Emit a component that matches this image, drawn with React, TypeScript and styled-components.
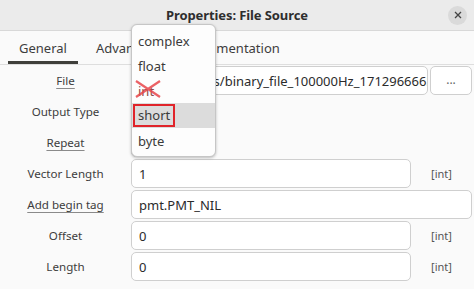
import React from "react";
import styled, { createGlobalStyle } from "styled-components";

const GlobalStyle = createGlobalStyle`
  html, body {
    margin: 0;
    padding: 0;
    background: #fafafa;
  }
  body {
    font-family: "Noto Sans", "Open Sans", sans-serif;
    color: #3d3d3d;
  }
`;

const Window = styled.div`
  position: relative;
  width: 474px;
  height: 289px;
  overflow: hidden;
  background: #fafafa;
  display: flex;
  flex-direction: column;
`;

const HeaderBar = styled.div`
  height: 31px;
  flex-shrink: 0;
  background: #ebebeb;
  border-bottom: 1px solid #d8d8d8;
  display: grid;
  grid-template-columns: 1fr auto 1fr;
  align-items: center;
  box-sizing: border-box;
`;

const Title = styled.div`
  grid-column: 2;
  font-size: 13px;
  font-weight: 700;
  color: #2e2e2e;
  letter-spacing: -0.1px;
`;

const CloseButton = styled.div`
  grid-column: 3;
  justify-self: end;
  margin-right: 7px;
  width: 19px;
  height: 19px;
  border-radius: 50%;
  background: #dadada;
  display: flex;
  align-items: center;
  justify-content: center;
`;

const TabBar = styled.div`
  height: 34px;
  flex-shrink: 0;
  box-sizing: border-box;
  border-bottom: 1px solid #dedede;
  display: flex;
  align-items: stretch;
  padding-left: 8px;
`;

const Tab = styled.div<{ $active?: boolean }>`
  padding: 0 11px;
  display: flex;
  align-items: center;
  font-size: 13px;
  color: #3d3d3d;
  box-sizing: border-box;
  border-bottom: 3px solid ${(p) => (p.$active ? "#3f3f3a" : "transparent")};
  padding-top: 3px;
  margin-right: 7px;
`;

const Form = styled.div`
  display: grid;
  grid-template-columns: 131px 1fr 61px;
  grid-auto-rows: 31px;
  padding-right: 2px;
`;

const Label = styled.div<{ $underline?: boolean }>`
  grid-column: 1;
  display: flex;
  align-items: center;
  justify-content: center;
  font-size: 11.6px;
  color: #3d3d3d;
  span {
    text-decoration: ${(p) => (p.$underline ? "underline" : "none")};
    text-decoration-color: #8a8a8a;
    text-underline-offset: 3px;
  }
`;

const Entry = styled.div<{ $span?: boolean }>`
  grid-column: ${(p) => (p.$span ? "2 / 4" : "2")};
  margin: 1px 0;
  box-sizing: border-box;
  background: #ffffff;
  border: 1px solid #cfcfcf;
  border-radius: 5px;
  display: flex;
  align-items: center;
  padding: 0 7px;
  font-size: 13px;
  color: #2b2b2b;
  white-space: nowrap;
  overflow: hidden;
`;

const FileCell = styled.div`
  grid-column: 2 / 4;
  display: flex;
  gap: 2px;
  margin: 1px 0;
`;

const FileEntry = styled(Entry)`
  flex: 1;
  margin: 0;
  min-width: 0;
`;

const SmallButton = styled.div`
  width: 42px;
  box-sizing: border-box;
  background: #ffffff;
  border: 1px solid #cfcfcf;
  border-radius: 5px;
  display: flex;
  align-items: center;
  justify-content: center;
  font-size: 12px;
  color: #666;
  padding-bottom: 3px;
`;

const Combo = styled.div`
  grid-column: 2;
  width: 84px;
  margin: 1px 0;
  box-sizing: border-box;
  background: #f6f6f6;
  border: 1px solid #cfcfcf;
  border-radius: 5px;
`;

const Unit = styled.div`
  grid-column: 3;
  display: flex;
  align-items: center;
  justify-content: center;
  font-size: 11px;
  color: #555;
`;

const Popup = styled.div`
  position: absolute;
  left: 131px;
  top: 24px;
  width: 85px;
  box-sizing: border-box;
  background: #fdfdfd;
  border: 1px solid #c6c6c6;
  border-radius: 6px;
  box-shadow: 0 1px 3px rgba(0, 0, 0, 0.25);
  padding: 3px 0;
  display: flex;
  flex-direction: column;
`;

const Item = styled.div<{ $selected?: boolean }>`
  position: relative;
  height: 25px;
  display: flex;
  align-items: center;
  padding-left: 6px;
  font-size: 13px;
  color: #3a3a3a;
  background: ${(p) => (p.$selected ? "#dcdcdc" : "transparent")};
`;

const Struck = styled.span`
  color: #8c4a4a;
`;

const Marked = styled.span`
  outline: 2px solid #e0242a;
  padding: 0 3px 1px 3px;
  margin-left: -3px;
`;

const Cross = styled.svg`
  position: absolute;
  left: 2px;
  top: 2px;
`;

const Dropdown = () => (
  <Popup>
    <Item>complex</Item>
    <Item>float</Item>
    <Item>
      <Struck>int</Struck>
      <Cross width="28" height="18" viewBox="0 0 28 18">
        <path d="M2 1 L26 17 M2 17 L26 1" stroke="#e8454a" strokeWidth="2.2" fill="none" opacity="0.85" />
      </Cross>
    </Item>
    <Item $selected>
      <Marked>short</Marked>
    </Item>
    <Item>byte</Item>
  </Popup>
);

const App: React.FC = () => {
  return (
    <Window>
      <GlobalStyle />
      <HeaderBar>
        <Title>Properties: File Source</Title>
        <CloseButton>
          <svg width="8" height="8" viewBox="0 0 8 8">
            <path d="M1 1 L7 7 M7 1 L1 7" stroke="#444" strokeWidth="1.3" />
          </svg>
        </CloseButton>
      </HeaderBar>
      <TabBar>
        <Tab $active>General</Tab>
        <Tab>Advanced</Tab>
        <Tab>Documentation</Tab>
      </TabBar>
      <Form>
        <Label $underline>
          <span>File</span>
        </Label>
        <FileCell>
          <FileEntry>/opt/samples/binary_file_100000Hz_1712966663.dat</FileEntry>
          <SmallButton>...</SmallButton>
        </FileCell>

        <Label>
          <span>Output Type</span>
        </Label>
        <Combo />
        <Unit />

        <Label $underline>
          <span>Repeat</span>
        </Label>
        <Combo />
        <Unit />

        <Label>
          <span>Vector Length</span>
        </Label>
        <Entry>1</Entry>
        <Unit>[int]</Unit>

        <Label $underline>
          <span>Add begin tag</span>
        </Label>
        <Entry $span>pmt.PMT_NIL</Entry>

        <Label>
          <span>Offset</span>
        </Label>
        <Entry>0</Entry>
        <Unit>[int]</Unit>

        <Label>
          <span>Length</span>
        </Label>
        <Entry>0</Entry>
        <Unit>[int]</Unit>
      </Form>
      <Dropdown />
    </Window>
  );
};

export default App;
